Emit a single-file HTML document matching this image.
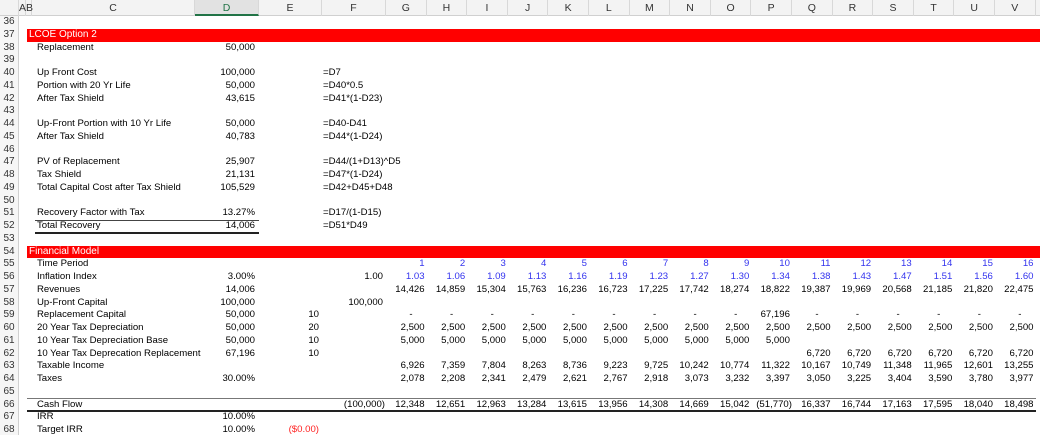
<!DOCTYPE html>
<html><head><meta charset="utf-8"><style>
*{margin:0;padding:0;box-sizing:border-box}
body{width:1040px;height:435px;overflow:hidden;background:#fff;font-family:"Liberation Sans",Arial,sans-serif;font-size:9.6px;color:#000;position:relative}
.hdr{position:absolute;left:0;top:0;width:1040px;height:16px;background:#f3f3f3;border-bottom:1px solid #d0d0d0}
.h{position:absolute;top:0;height:16px;line-height:16px;text-align:center;color:#333;font-size:10.5px;border-right:1px solid #d8d8d8}
.rns{position:absolute;left:0;top:16px;width:19px;height:419px;background:#f6f6f6;border-right:1px solid #d0d0d0;text-align:center;color:#333;font-size:10px;line-height:12.75px}
.row{position:absolute;left:0;width:1040px;height:12.75px;line-height:12.75px;white-space:nowrap}
.row span{position:absolute;top:0}
.lc{left:37px}
.d{left:175px;width:80px;text-align:right}
.e{left:239px;width:80px;text-align:right}
.f{left:303px;width:80px;text-align:right}
.fl{left:323px}
.g{position:absolute;left:386px;top:0;display:flex}
.g i{font-style:normal;width:40.6px;text-align:right;padding-right:2px;display:block}
.g i.z{padding-right:14px}
.b{color:#3333ee}
.red{position:absolute;left:27px;width:1013px;height:12.75px;background:#ff0000;color:#fff;line-height:12.75px;padding-left:2px;font-size:10px}
.ln{position:absolute}
</style></head><body>
<div class="hdr"></div>
<div class="h" style="left:0;width:19px"></div>
<div class="h" style="left:19px;width:7px">A</div>
<div class="h" style="left:26px;width:6px">B</div>
<div class="h" style="left:32px;width:163px">C</div>
<div class="h" style="left:195px;width:64px;background:#e2e2e2;color:#217346;border-bottom:2px solid #217346">D</div>
<div class="h" style="left:259px;width:63px">E</div>
<div class="h" style="left:322px;width:64px">F</div>
<div class="h" style="left:386px;width:40.6px">G</div>
<div class="h" style="left:426.6px;width:40.6px">H</div>
<div class="h" style="left:467.2px;width:40.6px">I</div>
<div class="h" style="left:507.8px;width:40.6px">J</div>
<div class="h" style="left:548.4px;width:40.6px">K</div>
<div class="h" style="left:589px;width:40.6px">L</div>
<div class="h" style="left:629.6px;width:40.6px">M</div>
<div class="h" style="left:670.2px;width:40.6px">N</div>
<div class="h" style="left:710.8px;width:40.6px">O</div>
<div class="h" style="left:751.4px;width:40.6px">P</div>
<div class="h" style="left:792px;width:40.6px">Q</div>
<div class="h" style="left:832.6px;width:40.6px">R</div>
<div class="h" style="left:873.2px;width:40.6px">S</div>
<div class="h" style="left:913.8px;width:40.6px">T</div>
<div class="h" style="left:954.4px;width:40.6px">U</div>
<div class="h" style="left:995px;width:40.6px">V</div>

<div class="rns">36<br>37<br>38<br>39<br>40<br>41<br>42<br>43<br>44<br>45<br>46<br>47<br>48<br>49<br>50<br>51<br>52<br>53<br>54<br>55<br>56<br>57<br>58<br>59<br>60<br>61<br>62<br>63<br>64<br>65<br>66<br>67<br>68</div>

<div class="red" style="top:28.75px">LCOE Option 2</div>
<div class="row" style="top:41.5px"><span class="lc">Replacement</span><span class="d">50,000</span></div>
<div class="row" style="top:67px"><span class="lc">Up Front Cost</span><span class="d">100,000</span><span class="fl">=D7</span></div>
<div class="row" style="top:79.75px"><span class="lc">Portion with 20 Yr Life</span><span class="d">50,000</span><span class="fl">=D40*0.5</span></div>
<div class="row" style="top:92.5px"><span class="lc">After Tax Shield</span><span class="d">43,615</span><span class="fl">=D41*(1-D23)</span></div>
<div class="row" style="top:118px"><span class="lc">Up-Front Portion with 10 Yr Life</span><span class="d">50,000</span><span class="fl">=D40-D41</span></div>
<div class="row" style="top:130.75px"><span class="lc">After Tax Shield</span><span class="d">40,783</span><span class="fl">=D44*(1-D24)</span></div>
<div class="row" style="top:156.25px"><span class="lc">PV of Replacement</span><span class="d">25,907</span><span class="fl">=D44/(1+D13)^D5</span></div>
<div class="row" style="top:169px"><span class="lc">Tax Shield</span><span class="d">21,131</span><span class="fl">=D47*(1-D24)</span></div>
<div class="row" style="top:181.75px"><span class="lc">Total Capital Cost after Tax Shield</span><span class="d">105,529</span><span class="fl">=D42+D45+D48</span></div>
<div class="row" style="top:207.25px"><span class="lc">Recovery Factor with Tax</span><span class="d">13.27%</span><span class="fl">=D17/(1-D15)</span></div>
<div class="row" style="top:220px"><span class="lc">Total Recovery</span><span class="d">14,006</span><span class="fl">=D51*D49</span></div>
<div class="ln" style="top:219.5px;left:35px;width:224px;height:1px;background:#444"></div>
<div class="ln" style="top:231.75px;left:35px;width:224px;height:2px;background:#222"></div>

<div class="red" style="top:245.5px">Financial Model</div>
<div class="row" style="top:258.25px"><span class="lc">Time Period</span><div class="g b"><i>1</i><i>2</i><i>3</i><i>4</i><i>5</i><i>6</i><i>7</i><i>8</i><i>9</i><i>10</i><i>11</i><i>12</i><i>13</i><i>14</i><i>15</i><i>16</i></div></div>
<div class="row" style="top:271px"><span class="lc">Inflation Index</span><span class="d">3.00%</span><span class="f">1.00</span><div class="g b"><i>1.03</i><i>1.06</i><i>1.09</i><i>1.13</i><i>1.16</i><i>1.19</i><i>1.23</i><i>1.27</i><i>1.30</i><i>1.34</i><i>1.38</i><i>1.43</i><i>1.47</i><i>1.51</i><i>1.56</i><i>1.60</i></div></div>
<div class="row" style="top:283.75px"><span class="lc">Revenues</span><span class="d">14,006</span><div class="g"><i>14,426</i><i>14,859</i><i>15,304</i><i>15,763</i><i>16,236</i><i>16,723</i><i>17,225</i><i>17,742</i><i>18,274</i><i>18,822</i><i>19,387</i><i>19,969</i><i>20,568</i><i>21,185</i><i>21,820</i><i>22,475</i></div></div>
<div class="row" style="top:296.5px"><span class="lc">Up-Front Capital</span><span class="d">100,000</span><span class="f">100,000</span></div>
<div class="row" style="top:309.25px"><span class="lc">Replacement Capital</span><span class="d">50,000</span><span class="e">10</span><div class="g"><i class="z">-</i><i class="z">-</i><i class="z">-</i><i class="z">-</i><i class="z">-</i><i class="z">-</i><i class="z">-</i><i class="z">-</i><i class="z">-</i><i>67,196</i><i class="z">-</i><i class="z">-</i><i class="z">-</i><i class="z">-</i><i class="z">-</i><i class="z">-</i></div></div>
<div class="row" style="top:322px"><span class="lc">20 Year Tax Depreciation</span><span class="d">50,000</span><span class="e">20</span><div class="g"><i>2,500</i><i>2,500</i><i>2,500</i><i>2,500</i><i>2,500</i><i>2,500</i><i>2,500</i><i>2,500</i><i>2,500</i><i>2,500</i><i>2,500</i><i>2,500</i><i>2,500</i><i>2,500</i><i>2,500</i><i>2,500</i></div></div>
<div class="row" style="top:334.75px"><span class="lc">10 Year Tax Depreciation Base</span><span class="d">50,000</span><span class="e">10</span><div class="g"><i>5,000</i><i>5,000</i><i>5,000</i><i>5,000</i><i>5,000</i><i>5,000</i><i>5,000</i><i>5,000</i><i>5,000</i><i>5,000</i></div></div>
<div class="row" style="top:347.5px"><span class="lc">10 Year Tax Deprecation Replacement</span><span class="d">67,196</span><span class="e">10</span><div class="g"><i></i><i></i><i></i><i></i><i></i><i></i><i></i><i></i><i></i><i></i><i>6,720</i><i>6,720</i><i>6,720</i><i>6,720</i><i>6,720</i><i>6,720</i></div></div>
<div class="row" style="top:360.25px"><span class="lc">Taxable Income</span><div class="g"><i>6,926</i><i>7,359</i><i>7,804</i><i>8,263</i><i>8,736</i><i>9,223</i><i>9,725</i><i>10,242</i><i>10,774</i><i>11,322</i><i>10,167</i><i>10,749</i><i>11,348</i><i>11,965</i><i>12,601</i><i>13,255</i></div></div>
<div class="row" style="top:373px"><span class="lc">Taxes</span><span class="d">30.00%</span><div class="g"><i>2,078</i><i>2,208</i><i>2,341</i><i>2,479</i><i>2,621</i><i>2,767</i><i>2,918</i><i>3,073</i><i>3,232</i><i>3,397</i><i>3,050</i><i>3,225</i><i>3,404</i><i>3,590</i><i>3,780</i><i>3,977</i></div></div>
<div class="row" style="top:398.5px"><span class="lc">Cash Flow</span><span class="f" style="left:305px">(100,000)</span><div class="g"><i>12,348</i><i>12,651</i><i>12,963</i><i>13,284</i><i>13,615</i><i>13,956</i><i>14,308</i><i>14,669</i><i>15,042</i><i style="padding-right:0">(51,770)</i><i>16,337</i><i>16,744</i><i>17,163</i><i>17,595</i><i>18,040</i><i>18,498</i></div></div>
<div class="row" style="top:411.25px"><span class="lc">IRR</span><span class="d">10.00%</span></div>
<div class="row" style="top:424px"><span class="lc">Target IRR</span><span class="d">10.00%</span><span class="e" style="color:#ff2222">($0.00)</span></div>
<div class="ln" style="top:398px;left:27px;width:1009px;height:1px;background:#777"></div>
<div class="ln" style="top:410.25px;left:27px;width:1009px;height:2px;background:#222"></div>
</body></html>
